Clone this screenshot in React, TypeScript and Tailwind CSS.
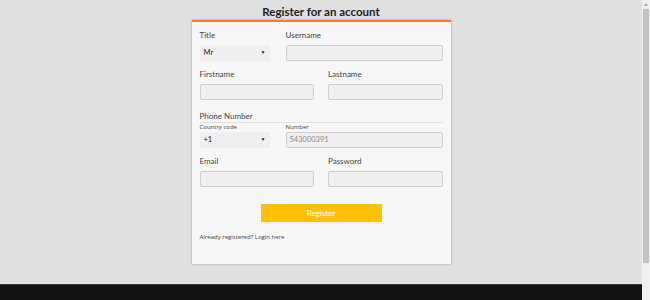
export default function App() {
  return (
    <div className="flex h-[300px] w-[650px] overflow-hidden bg-[#e0e0e0] font-['Lato','Open_Sans',sans-serif]">
      <div className="flex w-[642px] flex-col">
        <div className="flex h-[284px] flex-col items-center">
          <h1 className="h-[20px] pt-[3px] text-[11.5px] font-bold leading-[17px] text-[#222]">Register for an account</h1>
          <div className="w-[259px] border-t-2 border-t-[#f47a36] bg-[#f7f7f7] px-[8px] pb-[22px] pt-[5px] shadow-[0_0_2px_rgba(0,0,0,0.35)]">
            <div className="flex gap-[16px]">
              <div className="w-[70px]">
                <Label text="Title" />
                <Select value="Mr" />
              </div>
              <div className="flex-1">
                <Label text="Username" />
                <Input />
              </div>
            </div>

            <div className="mt-[5px] flex gap-[14px]">
              <div className="flex-1">
                <Label text="Firstname" />
                <Input />
              </div>
              <div className="flex-1">
                <Label text="Lastname" />
                <Input />
              </div>
            </div>

            <div className="mt-[11px] border-b border-[#e2e2e2] text-[8px] leading-[11px] text-[#444]">Phone Number</div>
            <div className="flex gap-[16px]">
              <div className="w-[70px]">
                <SmallLabel text="Country code" />
                <Select value="+1" />
              </div>
              <div className="flex-1">
                <SmallLabel text="Number" />
                <div className="flex h-[16px] items-center rounded-[2px] border border-[#cfcfcf] bg-[#efefef] px-[3px] text-[7.5px] text-[#8a8a8a]">543000391</div>
              </div>
            </div>

            <div className="mt-[5px] flex gap-[14px]">
              <div className="flex-1">
                <Label text="Email" />
                <Input />
              </div>
              <div className="flex-1">
                <Label text="Password" />
                <Input />
              </div>
            </div>

            <div className="mt-[17px] flex justify-center">
              <button className="h-[18px] w-[121px] bg-[#ffc107] text-[8px] text-white">Register</button>
            </div>
            <p className="mt-[10px] font-['Open_Sans',sans-serif] text-[6px] leading-[10px] text-[#444]">Already registered? Login here</p>
          </div>
        </div>
        <div className="flex-1 border-t border-[#3a3a3a] bg-[#111111]" />
      </div>
      <div className="flex w-[8px] flex-col items-center bg-[#f0f0f0]">
        <div className="mt-[3px] h-0 w-0 border-x-[2.5px] border-b-[3px] border-x-transparent border-b-[#a3a3a3]" />
        <div className="mt-[3px] h-[254px] w-[6px] bg-[#c1c1c1]" />
      </div>
    </div>
  );
}

function Label({ text }: { text: string }) {
  return <div className="h-[18px] pt-[2px] text-[8px] leading-[12px] text-[#444]">{text}</div>;
}

function SmallLabel({ text }: { text: string }) {
  return <div className="h-[9px] font-['Open_Sans',sans-serif] text-[6px] leading-[9px] text-[#444]">{text}</div>;
}

function Input() {
  return <div className="h-[16px] rounded-[2px] border border-[#cfcfcf] bg-[#efefef]" />;
}

function Select({ value }: { value: string }) {
  return (
    <div className="flex h-[16px] items-center justify-between bg-[#efefef] px-[4px] text-[7.5px] text-[#222]">
      <span>{value}</span>
      <span className="text-[5px]">▼</span>
    </div>
  );
}
